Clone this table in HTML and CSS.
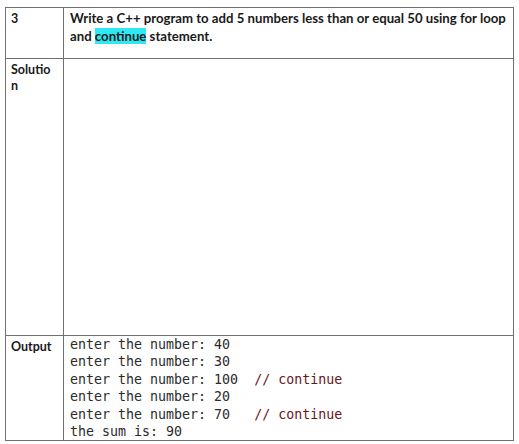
FILE: index.html
```html
<!DOCTYPE html>
<html>
<head>
<meta charset="utf-8">
<link rel="stylesheet" href="styles.css">
</head>
<body>
<div class="page">
<table class="sheet">
  <colgroup><col class="c1"><col class="c2"></colgroup>
  <tr class="r-q">
    <td class="label">3</td>
    <td class="question">Write a C++ program to add 5 numbers less than or equal 50 using for loop and <span class="hl">continue</span> statement.</td>
  </tr>
  <tr class="r-sol">
    <td class="label">Solutio n</td>
    <td></td>
  </tr>
  <tr class="r-out">
    <td class="label">Output</td>
    <td class="output"><pre class="code">enter the number: 40
enter the number: 30
enter the number: 100  <span class="cm">// continue</span>
enter the number: 20
enter the number: 70   <span class="cm">// continue</span>
the sum is: 90</pre></td>
  </tr>
</table>
</div>
</body>
</html>
```
FILE: styles.css
```css
html, body { margin: 0; padding: 0; background: #fff; }
.page { padding: 7px 0 0 5px; }
.sheet {
  border-collapse: collapse;
  table-layout: fixed;
  width: 509px;
  font-family: Lato, "Open Sans", sans-serif;
  font-weight: bold;
  color: #1a1a1a;
}
.c1 { width: 58px; }
.sheet td {
  border: 1px solid #707070;
  vertical-align: top;
  padding: 2px 5px 0 5px;
}
.sheet td.question { font-size: 13.2px; line-height: 18px; padding: 1px 1px 0 6px; }
.r-q { height: 51px; }
.r-sol { height: 277px; }
.r-out { height: 103px; }
.label { word-break: break-all; font-size: 12.5px; line-height: 16px; }
.sheet td.label { padding-top: 3px; }
.hl { background: #2ee8f4; }
.sheet td.output { padding: 0 0 0 6px; }
.code {
  margin: 0;
  font-family: "DejaVu Sans Mono", monospace;
  font-weight: normal;
  font-size: 13.3px;
  line-height: 17.4px;
  color: #2b2b2b;
}
.cm { color: #6b1518; }
```
